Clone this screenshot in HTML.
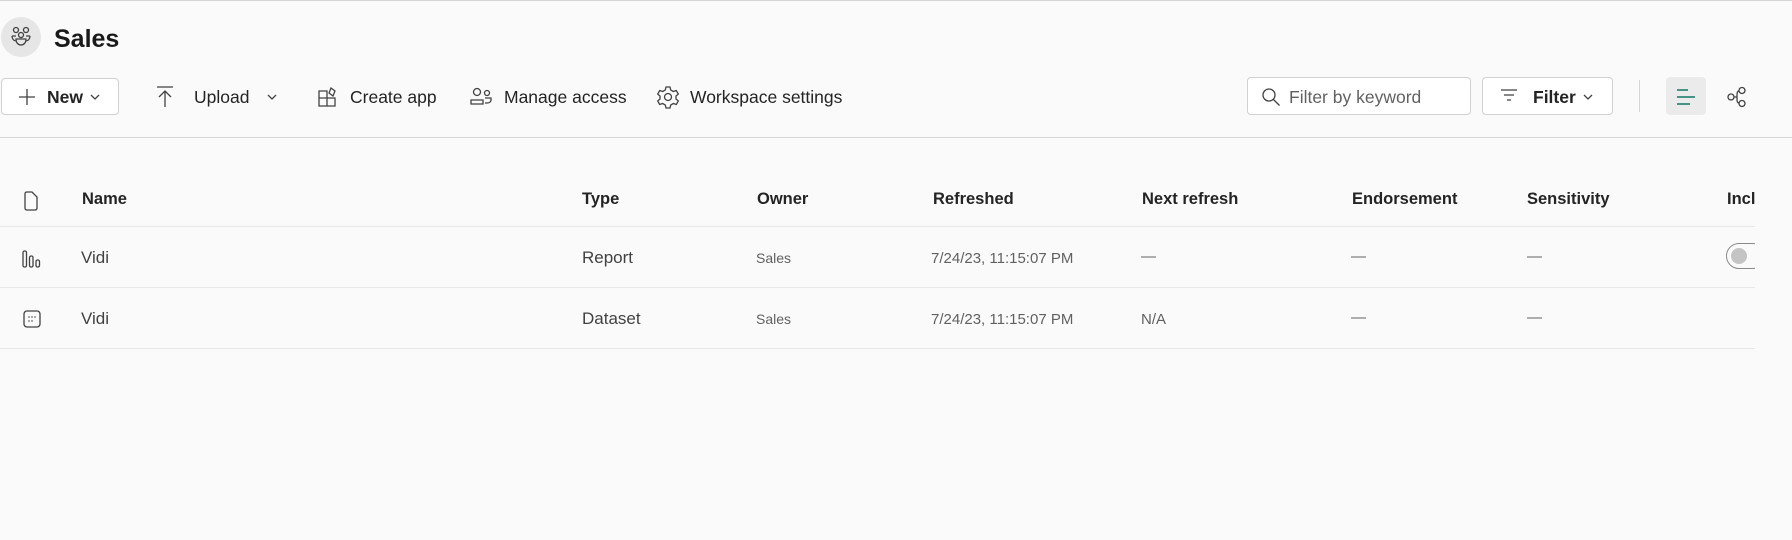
<!DOCTYPE html>
<html><head><meta charset="utf-8"><style>
*{box-sizing:border-box;margin:0;padding:0}
html,body{width:1792px;height:540px;overflow:hidden;background:#fafafa;font-family:"Liberation Sans",sans-serif;color:#242424}
.abs{position:absolute}
.t{position:absolute;white-space:nowrap}
.tb{font-size:17.5px}
.hdr{font-size:16.5px;font-weight:bold;color:#242424;top:190px}
.r1{top:248px}.r2{top:309px}
.line{position:absolute;left:0;width:1755px;height:1px;background:#e8e8e8}
svg{position:absolute;fill:none;stroke:#424242;stroke-width:1.3}
</style></head><body>
<div class="abs" style="left:0;top:0;width:1792px;height:1px;background:#d6d6d6"></div>
<div class="abs" style="left:1px;top:17px;width:40px;height:40px;border-radius:50%;background:#e6e6e6"></div>
<svg style="left:10px;top:26px" width="22" height="22" viewBox="0 0 22 22"><circle cx="6" cy="4" r="2.5"/><circle cx="16" cy="4" r="2.5"/><circle cx="11" cy="9" r="2.5"/><path d="M2 10h4M16 10h4M2 10c0 3 2 5 4 5M20 10c0 3-2 5-4 5M6 13h10c0 4-2.5 6-5 6s-5-2-5-6z"/></svg>
<div class="t" style="left:54px;top:25px;font-size:25px;font-weight:bold;color:#1a1a1a">Sales</div>

<div class="abs" style="left:1px;top:78px;width:118px;height:37px;border:1px solid #d1d1d1;border-radius:4px;background:#fff"></div>
<svg style="left:17px;top:87px" width="20" height="20" viewBox="0 0 20 20"><path d="M10 2v16M2 10h16"/></svg>
<div class="t tb" style="left:47px;top:87px;font-weight:bold">New</div>
<svg style="left:90px;top:93px" width="10" height="8" viewBox="0 0 10 8"><path d="M1 2l4 4 4-4"/></svg>

<svg style="left:155px;top:85px" width="20" height="24" viewBox="0 0 20 24"><path d="M2 2h16M10 6v16M4 12l6-6 6 6"/></svg>
<div class="t tb" style="left:194px;top:87px">Upload</div>
<svg style="left:267px;top:93px" width="10" height="8" viewBox="0 0 10 8"><path d="M1 2l4 4 4-4"/></svg>

<svg style="left:317px;top:86px" width="22" height="22" viewBox="0 0 22 22"><path d="M2 5h8v15H2zM2 12h16v8h-8M10 12V5M14 2l4 3-2 5-4-3z"/></svg>
<div class="t tb" style="left:350px;top:87px">Create app</div>

<svg style="left:470px;top:87px" width="24" height="20" viewBox="0 0 24 20"><circle cx="7" cy="5" r="3.5"/><circle cx="17" cy="6" r="2.5"/><path d="M1 17v-4h12v4zM15 11h6v2c0 2-2 3-4 3h-2"/></svg>
<div class="t tb" style="left:504px;top:87px">Manage access</div>

<svg style="left:656px;top:85px" width="24" height="24" viewBox="0 0 24 24"><circle cx="12" cy="12" r="3.5"/><path d="M10 2h4l.7 3 2.6 1.5 3-1 2 3.5-2.3 2v3l2.3 2-2 3.5-3-1-2.6 1.5-.7 3h-4l-.7-3-2.6-1.5-3 1-2-3.5 2.3-2v-3L1.7 9l2-3.5 3 1L9.3 5z"/></svg>
<div class="t tb" style="left:690px;top:87px">Workspace settings</div>

<div class="abs" style="left:1247px;top:77px;width:224px;height:38px;border:1px solid #d1d1d1;border-radius:4px;background:#fff"></div>
<svg style="left:1261px;top:87px" width="20" height="20" viewBox="0 0 20 20"><circle cx="8" cy="8" r="6"/><path d="M12.5 12.5l6 6"/></svg>
<div class="t tb" style="left:1289px;top:87px;color:#616161">Filter by keyword</div>

<div class="abs" style="left:1482px;top:77px;width:131px;height:38px;border:1px solid #d1d1d1;border-radius:4px;background:#fff"></div>
<svg style="left:1499px;top:88px" width="20" height="16" viewBox="0 0 20 16"><path d="M2 2h16M5 7h10M8 12h4"/></svg>
<div class="t tb" style="left:1533px;top:87px;font-weight:bold">Filter</div>
<svg style="left:1583px;top:93px" width="10" height="8" viewBox="0 0 10 8"><path d="M1 2l4 4 4-4"/></svg>

<div class="abs" style="left:1639px;top:80px;width:1px;height:32px;background:#d6d6d6"></div>
<div class="abs" style="left:1666px;top:77px;width:40px;height:38px;border-radius:4px;background:#ebebeb"></div>
<svg style="left:1676px;top:87px;stroke:#117865;stroke-width:1.5" width="20" height="20" viewBox="0 0 20 20"><path d="M1 3h11M1 10h18M1 17h13"/></svg>
<svg style="left:1726px;top:86px" width="22" height="22" viewBox="0 0 22 22"><circle cx="5" cy="11" r="3"/><circle cx="16" cy="4.5" r="3"/><circle cx="16" cy="17.5" r="3"/><path d="M8 11h3M13 5c-2 0-2 2-2 6s0 6 2 6"/></svg>

<div class="abs" style="left:0;top:137px;width:1792px;height:1px;background:#d6d6d6"></div>

<svg style="left:23px;top:191px" width="16" height="20" viewBox="0 0 16 20"><path d="M2 3q0-2 2-2h5l5 5v11q0 2-2 2H4q-2 0-2-2z"/></svg>
<div class="t hdr" style="left:82px">Name</div>
<div class="t hdr" style="left:582px">Type</div>
<div class="t hdr" style="left:757px">Owner</div>
<div class="t hdr" style="left:933px">Refreshed</div>
<div class="t hdr" style="left:1142px">Next refresh</div>
<div class="t hdr" style="left:1352px">Endorsement</div>
<div class="t hdr" style="left:1527px">Sensitivity</div>
<div class="t hdr" style="left:1727px;width:28px;overflow:hidden">Incl</div>

<div class="line" style="top:226px"></div>
<div class="line" style="top:287px"></div>
<div class="line" style="top:348px"></div>

<svg style="left:22px;top:250px" width="20" height="18" viewBox="0 0 20 18"><rect x="1" y="1" width="3.5" height="16" rx="1.5"/><rect x="7.5" y="6" width="3.5" height="11" rx="1.5"/><rect x="14" y="10" width="3.5" height="7" rx="1.5"/></svg>
<div class="t r1" style="left:81px;font-size:17px;color:#424242">Vidi</div>
<div class="t r1" style="left:582px;font-size:17px;color:#424242">Report</div>
<div class="t r1" style="left:756px;top:250px;font-size:14px;color:#616161">Sales</div>
<div class="t r1" style="left:931px;top:250px;font-size:15px;color:#616161">7/24/23, 11:15:07 PM</div>
<div class="t r1" style="left:1141px;font-size:15px;color:#616161">—</div>
<div class="t r1" style="left:1351px;font-size:15px;color:#616161">—</div>
<div class="t r1" style="left:1527px;font-size:15px;color:#616161">—</div>
<div class="abs" style="left:1726px;top:243px;width:40px;height:26px;border:1px solid #8a8a8a;border-radius:13px"></div>
<div class="abs" style="left:1731px;top:248px;width:16px;height:16px;border-radius:50%;background:#c4c4c4"></div>
<div class="abs" style="left:1755px;top:230px;width:37px;height:50px;background:#fafafa"></div>

<svg style="left:22px;top:309px" width="20" height="20" viewBox="0 0 20 20"><rect x="2" y="2" width="16" height="16" rx="3"/><path d="M6.5 8h1M9.5 8h1M12.5 8h1M6.5 12h1M9.5 12h1" stroke-width="1.8"/></svg>
<div class="t r2" style="left:81px;font-size:17px;color:#424242">Vidi</div>
<div class="t r2" style="left:582px;font-size:17px;color:#424242">Dataset</div>
<div class="t r2" style="left:756px;top:311px;font-size:14px;color:#616161">Sales</div>
<div class="t r2" style="left:931px;top:311px;font-size:15px;color:#616161">7/24/23, 11:15:07 PM</div>
<div class="t r2" style="left:1141px;top:311px;font-size:15px;color:#616161">N/A</div>
<div class="t r2" style="left:1351px;font-size:15px;color:#616161">—</div>
<div class="t r2" style="left:1527px;font-size:15px;color:#616161">—</div>
</body></html>
